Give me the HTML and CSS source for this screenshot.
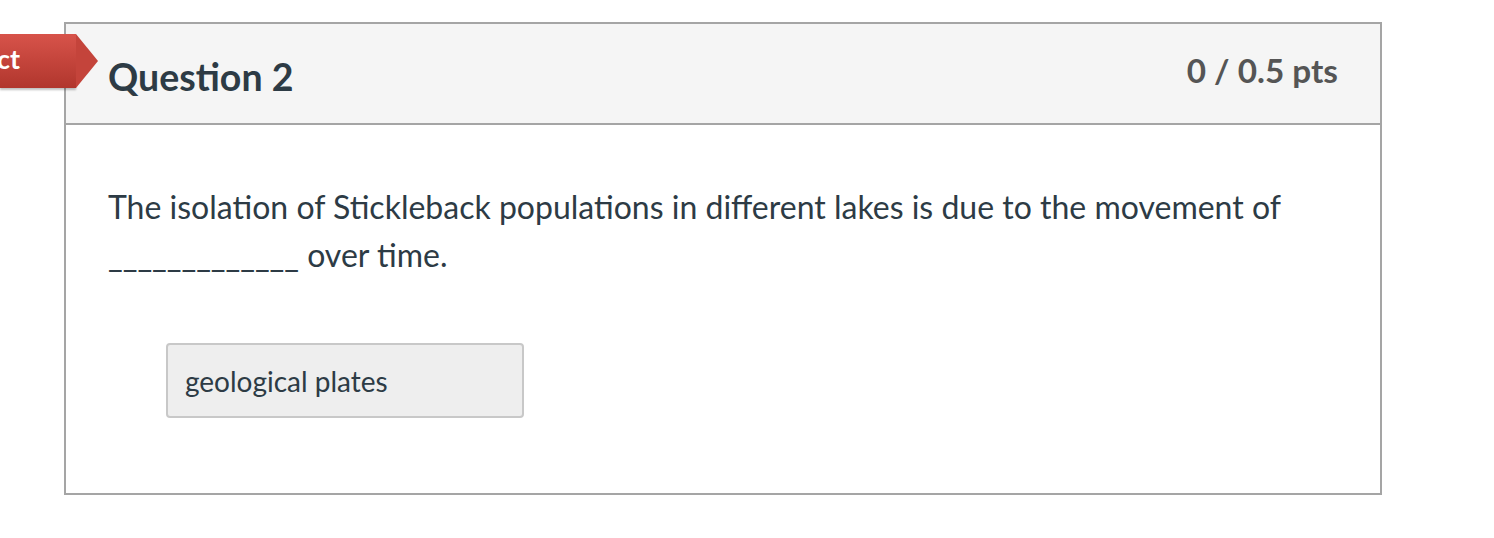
FILE: index.html
```html
<!DOCTYPE html>
<html>
<head>
<meta charset="utf-8">
<link rel="stylesheet" href="styles.css">
</head>
<body>
<div class="page">
  <div class="tag">ct</div>
  <div class="card">
    <div class="card-header">
      <h2 class="title">Question 2</h2>
      <div class="points">0 / 0.5 pts</div>
    </div>
    <div class="card-body">
      <p class="question">The isolation of Stickleback populations in different lakes is due to the movement of<br>_____________ over time.</p>
      <div class="answer">geological plates</div>
    </div>
  </div>
</div>
</body>
</html>
```
FILE: styles.css
```css
html, body {
  margin: 0;
  padding: 0;
  background: #fff;
}
body {
  font-family: Lato, "Open Sans", sans-serif;
  color: #2d3b45;
}
.page {
  position: relative;
  padding: 22px 0 0 64px;
}
.card {
  width: 1318px;
  height: 473px;
  box-sizing: border-box;
  border: 2px solid #a5a5a5;
  background: #fff;
}
.card-header {
  display: flex;
  justify-content: space-between;
  align-items: flex-start;
  height: 101px;
  box-sizing: border-box;
  background: #f5f5f5;
  border-bottom: 2px solid #a5a5a5;
  padding: 0 42px;
}
.title {
  margin: 0;
  padding-top: 33px;
  font-size: 37.5px;
  font-weight: 700;
  line-height: 40px;
  color: #2d3b45;
}
.points {
  padding-top: 28px;
  font-size: 33.3px;
  font-weight: 700;
  line-height: 36px;
  color: #555;
}
.card-body {
  padding: 58px 42px 0 42px;
}
.question {
  margin: 0;
  font-size: 32px;
  line-height: 48px;
}
.answer {
  margin: 64px 0 0 58px;
  width: 358px;
  height: 75px;
  box-sizing: border-box;
  border: 2px solid #c8c8c8;
  border-radius: 4px;
  background: #eeeeee;
  padding-left: 17px;
  display: flex;
  align-items: center;
  font-size: 28px;
}
.tag {
  position: absolute;
  left: 0;
  top: 34px;
  width: 76px;
  height: 54px;
  background: linear-gradient(#d7534a, #b1362d);
  color: #fff;
  font-weight: 700;
  font-size: 27px;
  line-height: 50px;
  text-indent: -3px;
  box-shadow: 0 2px 2px rgba(0,0,0,0.25);
}
.tag::after {
  content: "";
  position: absolute;
  left: 76px;
  top: 0;
  width: 0;
  height: 0;
  border-top: 27px solid transparent;
  border-bottom: 27px solid transparent;
  border-left: 22px solid #c4443b;
}
```
